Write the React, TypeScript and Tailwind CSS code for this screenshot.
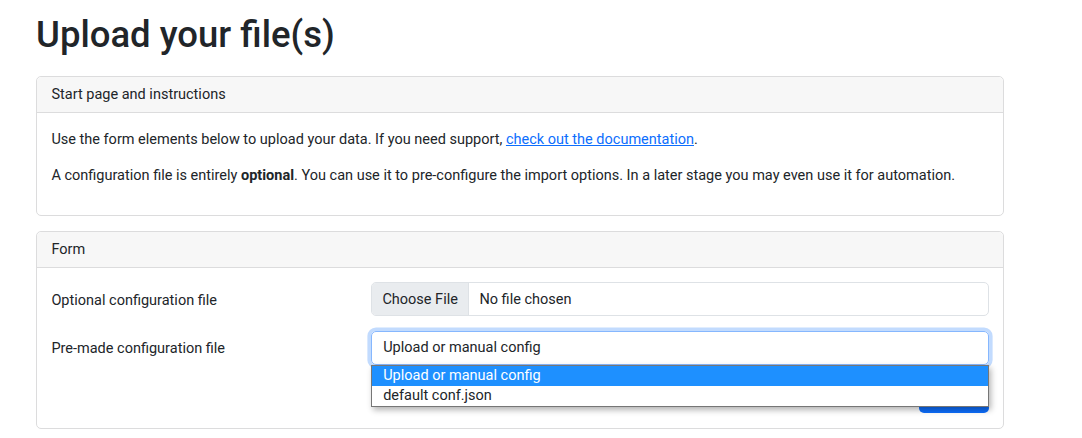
import React from "react";

export default function App() {
  return (
    <div className="relative min-h-[438px] bg-white text-[#212529] text-[14.5px] leading-[21.6px]" style={{ fontFamily: 'Roboto, "Liberation Sans", sans-serif' }}>
      <div className="pl-[36px] w-[1004px]">
        <h1 className="pt-[13px] text-[36.5px] leading-[43px] font-medium mb-[20px]">Upload your file(s)</h1>
        <div className="border border-[#dcdcdd] rounded-[5px] mb-[15px]">
          <div className="h-[36px] px-[14.4px] flex items-center bg-[#f7f7f7] border-b border-[#dcdcdd] rounded-t-[5px]">Start page and instructions</div>
          <div className="pt-[16.4px] px-[14.4px] pb-[28px]">
            <p className="mb-[14.4px]">
              Use the form elements below to upload your data. If you need support,{" "}
              <a className="text-[#0d6efd] underline">check out the documentation</a>.
            </p>
            <p className="whitespace-nowrap">
              A configuration file is entirely <b>optional</b>. You can use it to pre-configure the import options. In a later stage you may even use it for automation.
            </p>
          </div>
        </div>
        <div className="border border-[#dcdcdd] rounded-[5px]">
          <div className="h-[36px] px-[14.4px] pt-[1px] flex items-center bg-[#f7f7f7] border-b border-[#dcdcdd] rounded-t-[5px]">Form</div>
          <div className="p-[14.4px] pb-[15px]">
            <div className="flex items-center mb-[14.4px]">
              <div className="w-[320px] shrink-0 pt-[2px]">Optional configuration file</div>
              <div className="flex-1 h-[34px] flex border border-[#dee2e6] rounded-[5px] overflow-hidden">
                <div className="px-[10px] flex items-center bg-[#e9ecef] border-r border-[#dee2e6]">Choose File</div>
                <div className="px-[10.5px] flex items-center">No file chosen</div>
              </div>
            </div>
            <div className="flex items-center mb-[14.4px]">
              <div className="w-[320px] shrink-0 pt-[2px]">Pre-made configuration file</div>
              <div className="relative flex-1">
                <div className="h-[34px] flex items-center px-[10.8px] pt-[1px] border border-[#86b7fe] rounded-[5px] shadow-[0_0_0_3.6px_rgba(13,110,253,0.25)]">Upload or manual config</div>
                <div className="absolute left-0 right-0 top-[34px] z-10 bg-white border border-[#767676] shadow-[2px_3px_6px_rgba(0,0,0,0.3)]">
                  <div className="h-[20px] flex items-center px-[10.8px] bg-[#1e90ff] text-white">Upload or manual config</div>
                  <div className="h-[20px] flex items-center px-[10.8px]">default conf.json</div>
                </div>
              </div>
            </div>
            <div className="flex justify-end">
              <button className="h-[34px] w-[70px] bg-[#0d6efd] text-white rounded-[5px]">Submit</button>
            </div>
          </div>
        </div>
      </div>
    </div>
  );
}
